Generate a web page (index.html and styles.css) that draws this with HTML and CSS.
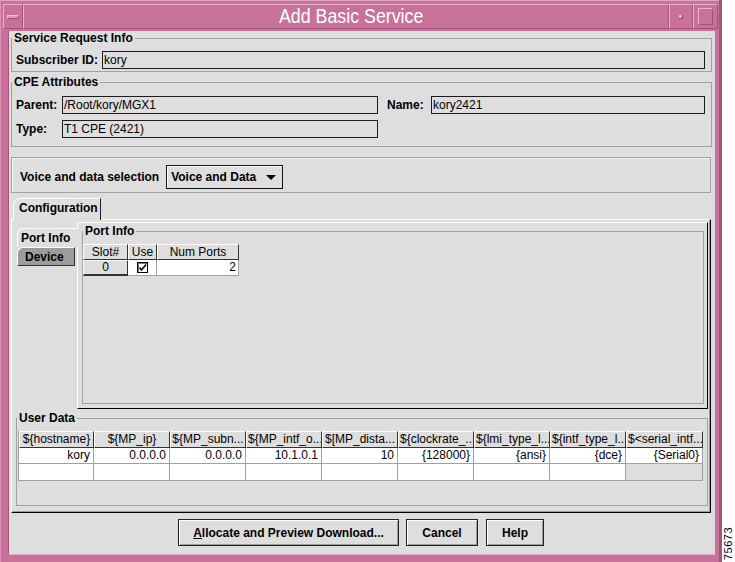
FILE: index.html
```html
<!DOCTYPE html>
<html>
<head>
<meta charset="utf-8">
<title>Add Basic Service</title>
<link rel="stylesheet" href="styles.css">
</head>
<body>
<div class="screen">
  <div class="window">
    <div class="titlebar">
      <div class="tb-btn tb-menu"><span class="tb-dash"></span></div>
      <div class="tb-title"><span class="tb-text">Add Basic Service</span></div>
      <div class="tb-btn tb-min"><span class="tb-dot"></span></div>
      <div class="tb-btn tb-max"><span class="tb-square"></span></div>
    </div>
    <div class="frame">
      <div class="content">
        <fieldset class="group g1">
          <legend>Service Request Info</legend>
          <div class="g1-body">
            <span class="lbl lbl-sub">Subscriber ID:</span>
            <div class="field f-sub">kory</div>
          </div>
        </fieldset>

        <fieldset class="group g2">
          <legend>CPE Attributes</legend>
          <div class="cpe-grid">
            <span class="lbl">Parent:</span>
            <div class="field">/Root/kory/MGX1</div>
            <span class="lbl lbl-name">Name:</span>
            <div class="field">kory2421</div>
            <span class="lbl">Type:</span>
            <div class="field">T1 CPE (2421)</div>
          </div>
        </fieldset>

        <div class="voice">
          <span class="lbl lbl-voice">Voice and data selection</span>
          <div class="combo"><span class="combo-text">Voice and Data</span><span class="combo-arrow"></span></div>
        </div>

        <div class="tabrow"><div class="tab">Configuration</div></div>

        <div class="tabpanel">
          <div class="toprow">
            <div class="vtabs">
              <div class="vtab vtab-on">Port Info</div>
              <div class="vtab vtab-off">Device</div>
            </div>
            <div class="portpanel">
              <fieldset class="group g-port">
                <legend>Port Info</legend>
                <div class="port-body">
                  <div class="ptable">
                    <div class="th">Slot#</div>
                    <div class="th">Use</div>
                    <div class="th">Num Ports</div>
                    <div class="rowhead">0</div>
                    <div class="td td-check"><span class="check"><svg width="9" height="9" viewBox="0 0 9 9"><path d="M1.5 4.5 L3.5 7 L8 1.5" fill="none" stroke="#000" stroke-width="1.6"/></svg></span></div>
                    <div class="td td-num">2</div>
                  </div>
                </div>
              </fieldset>
            </div>
          </div>

          <fieldset class="group g-user">
            <legend>User Data</legend>
            <div class="user-body">
              <div class="utable">
                <div class="uh">${hostname}</div>
                <div class="uh">${MP_ip}</div>
                <div class="uh">${MP_subn...</div>
                <div class="uh">${MP_intf_o...</div>
                <div class="uh">$[MP_dista...</div>
                <div class="uh">${clockrate_...</div>
                <div class="uh">${lmi_type_l...</div>
                <div class="uh">${intf_type_l...</div>
                <div class="uh">$&lt;serial_intf...</div>

                <div class="ud">kory</div>
                <div class="ud">0.0.0.0</div>
                <div class="ud">0.0.0.0</div>
                <div class="ud">10.1.0.1</div>
                <div class="ud">10</div>
                <div class="ud">{128000}</div>
                <div class="ud">{ansi}</div>
                <div class="ud">{dce}</div>
                <div class="ud">{Serial0}</div>

                <div class="ud"></div>
                <div class="ud"></div>
                <div class="ud"></div>
                <div class="ud"></div>
                <div class="ud"></div>
                <div class="ud"></div>
                <div class="ud"></div>
                <div class="ud"></div>
                <div class="ud ud-gray"></div>
              </div>
            </div>
          </fieldset>
        </div>

        <div class="buttons">
          <button class="btn btn-alloc"><span class="mn">A</span>llocate and Preview Download...</button>
          <button class="btn btn-cancel">Cancel</button>
          <button class="btn btn-help">Help</button>
        </div>
      </div>
    </div>
  </div>
  <div class="side"><span class="fignum">75673</span></div>
</div>
</body>
</html>
```

FILE: styles.css
```css
* { box-sizing: border-box; }
html, body { margin: 0; padding: 0; }
body {
  width: 735px;
  height: 562px;
  overflow: hidden;
  background: #ffffff;
  font-family: "Liberation Sans", Arial, sans-serif;
  font-size: 12px;
  color: #000;
}

.screen { display: flex; width: 735px; height: 562px; }

/* ---------- window frame ---------- */
.window {
  width: 722px;
  height: 562px;
  display: flex;
  flex-direction: column;
  background: #c8719a;
  border-left: 1px solid #dc93b5;
  border-right: 3px solid #a5557b;
}

.titlebar {
  height: 31px;
  display: flex;
  padding: 3px 1px 2px 2px;
  border-top: 1px solid #e2a2c0;
}
.tb-btn, .tb-title {
  border: 1px solid;
  border-color: #e9b2cb #a3517a #a3517a #e9b2cb;
}
.tb-menu {
  width: 20px;
  display: flex;
  align-items: center;
  justify-content: center;
}
.tb-dash {
  width: 12px;
  height: 4px;
  background: #dc98b8;
  border: 1px solid;
  border-color: #f0c6d8 #a3517a #a3517a #f0c6d8;
}
.tb-title {
  flex: 1;
  display: flex;
  align-items: center;
  justify-content: center;
  padding-left: 10px;
}
.tb-text {
  display: inline-block;
  color: #ffffff;
  font-family: "Liberation Sans", Arial, sans-serif;
  font-size: 20px;
  line-height: 23px;
  transform: scaleX(0.89);
}
.tb-min {
  width: 24px;
  display: flex;
  align-items: center;
  justify-content: center;
}
.tb-dot {
  width: 4px;
  height: 4px;
  background: #e5b5ca;
  border-right: 1px solid #8f4566;
  border-bottom: 1px solid #8f4566;
}
.tb-max {
  width: 25px;
  display: flex;
  align-items: center;
  justify-content: center;
}
.tb-square {
  width: 15px;
  height: 17px;
  border: 1px solid;
  border-color: #eab4cc #a3517a #a3517a #eab4cc;
}

.frame {
  flex: 1;
  display: flex;
  padding: 0 4px 8px 8px;
}

.content {
  flex: 1;
  background: #dedede;
  display: flex;
  flex-direction: column;
  padding: 1px 3px 0 2px;
  box-shadow: -1px 0 0 #a5557b, 0 1px 0 #e6a9c5;
}

/* ---------- group boxes ---------- */
fieldset.group {
  margin: 0;
  padding: 0;
  min-width: 0;
  border: 1px solid #a2a2a2;
}
fieldset.group > legend {
  padding: 0 2px;
  margin: 0;
  font-weight: bold;
  font-size: 12px;
  line-height: 13px;
}

.lbl { font-weight: bold; white-space: nowrap; }

.field {
  height: 18px;
  border: 1px solid #1c1c1c;
  background: #dedede;
  padding: 0 1px;
  line-height: 16px;
  white-space: nowrap;
  overflow: hidden;
}

.g1-body {
  display: flex;
  align-items: center;
  padding: 6px 6px 2px 4px;
}
.lbl-sub { width: 86px; }
.f-sub { flex: 1; }

fieldset.g2 { margin-top: 4px; }
.cpe-grid {
  display: grid;
  grid-template-columns: 46px 316px 53px 274px;
  grid-auto-rows: 18px;
  row-gap: 6px;
  align-items: center;
  padding: 7px 0 8px 4px;
}
.lbl-name { padding-left: 9px; }

/* ---------- voice panel ---------- */
.voice {
  margin-top: 10px;
  margin-right: 1px;
  border: 1px solid #a2a2a2;
  box-shadow: inset 1px 1px 0 #f4f4f4;
  display: flex;
  align-items: center;
  gap: 7px;
  padding: 7px 8px 3px 8px;
}
.combo {
  width: 117px;
  height: 24px;
  border: 1px solid #111;
  box-shadow: inset 1px 1px 0 #ffffff;
  display: flex;
  align-items: center;
  justify-content: space-between;
  padding: 0 6px 0 4px;
  font-weight: bold;
}
.combo-arrow {
  width: 0;
  height: 0;
  border-left: 5px solid transparent;
  border-right: 5px solid transparent;
  border-top: 5px solid #000;
  margin-top: 1px;
}

/* ---------- tabs ---------- */
.tabrow {
  margin-top: 5px;
  display: flex;
  position: relative;
  z-index: 1;
}
.tab {
  margin-left: 2px;
  width: 88px;
  height: 22px;
  margin-bottom: -1px;
  border-top: 1px solid #ffffff;
  border-left: 1px solid #ffffff;
  border-right: 1px solid #222;
  border-top-left-radius: 7px;
  background: #dedede;
  font-weight: bold;
  line-height: 19px;
  padding-left: 5px;
}

.tabpanel {
  height: 294px;
  margin-right: 1px;
  border-top: 1px solid #ffffff;
  border-left: 1px solid #ffffff;
  border-right: 1px solid #000;
  border-bottom: 1px solid #000;
  box-shadow: inset -1px -1px 0 #9a9a9a;
  padding: 2px 2px 6px 5px;
  display: flex;
  flex-direction: column;
}

.toprow {
  height: 187px;
  display: flex;
}
.vtabs {
  width: 60px;
  padding-top: 6px;
  display: flex;
  flex-direction: column;
}
.vtab {
  height: 19px;
  font-weight: bold;
  line-height: 18px;
  border-top-left-radius: 6px;
}
.vtab-on {
  border-top: 1px solid #fff;
  border-left: 1px solid #fff;
  padding-left: 3px;
  background: #dedede;
  position: relative;
  z-index: 1;
  margin-right: -1px;
}
.vtab-off {
  width: 58px;
  background: #9c9c9c;
  border-top: 1px solid #fff;
  border-left: 1px solid #fff;
  border-right: 1px solid #333;
  border-bottom: 1px solid #333;
  padding-left: 7px;
}

.portpanel {
  flex: 1;
  display: flex;
  border-top: 1px solid #fff;
  border-left: 1px solid #fff;
  border-right: 1px solid #000;
  border-bottom: 1px solid #000;
}
fieldset.g-port {
  flex: 1;
  margin: 2px 3px 4px 4px;
}
.port-body { padding: 6px 0 0 0; }
.ptable {
  display: grid;
  grid-template-columns: 45px 29px 82px;
  grid-template-rows: 16px 16px;
  width: 156px;
}
.th, .uh {
  background: #dedede;
  border-top: 1px solid #ffffff;
  border-left: 1px solid #ffffff;
  border-right: 1px solid #333;
  border-bottom: 1px solid #333;
  text-align: center;
  line-height: 14px;
  white-space: nowrap;
  overflow: hidden;
}
.rowhead {
  background: #dedede;
  border-top: 1px solid #ffffff;
  border-left: 1px solid #ffffff;
  border-right: 1px solid #333;
  border-bottom: 2px solid #333;
  text-align: center;
  line-height: 13px;
}
.td {
  background: #ffffff;
  border-right: 1px solid #a0a0a0;
  border-bottom: 1px solid #a0a0a0;
  line-height: 15px;
}
.td-check {
  display: flex;
  align-items: center;
  justify-content: center;
}
.check {
  width: 11px;
  height: 11px;
  border: 1px solid #000;
  box-shadow: inset 1px 1px 0 #777;
  background: #fff;
  display: flex;
  align-items: center;
  justify-content: center;
}
.check svg { display: block; }
.td-num { text-align: right; padding-right: 2px; }

/* ---------- user data ---------- */
fieldset.g-user {
  margin: 3px 0 0 -1px;
}
.user-body { padding: 6px 0 24px 1px; }
.utable {
  display: grid;
  grid-template-columns: 75px repeat(7, 76px) 77px;
  grid-template-rows: 17px 16px 17px;
  width: 684px;
  border-left: 1px solid #a0a0a0;
}
.uh {
  text-align: center;
  padding: 0 1px;
}
.ud {
  background: #ffffff;
  border-right: 1px solid #a0a0a0;
  border-bottom: 1px solid #a0a0a0;
  text-align: right;
  padding-right: 3px;
  line-height: 15px;
  white-space: nowrap;
}
.ud-gray { background: #dedede; }

/* ---------- buttons ---------- */
.buttons {
  margin-top: 6px;
  display: flex;
  justify-content: center;
  gap: 7px;
  padding-right: 1px;
}
.btn {
  height: 27px;
  margin: 0;
  padding: 0;
  background: #dedede;
  border: 1px solid #222;
  box-shadow: inset 1px 1px 0 #ffffff, inset -1px -1px 0 #9c9c9c;
  font-family: "Liberation Sans", Arial, sans-serif;
  font-size: 12px;
  font-weight: bold;
  color: #000;
}
.btn-alloc { width: 221px; }
.btn-cancel { width: 72px; }
.btn-help { width: 58px; margin-left: 1px; }
.mn { text-decoration: underline; }

/* ---------- figure number ---------- */
.side {
  flex: 1;
  display: flex;
  flex-direction: column;
  justify-content: flex-end;
  align-items: center;
  padding-bottom: 2px;
}
.fignum {
  writing-mode: vertical-rl;
  transform: rotate(180deg);
  font-size: 11px;
  line-height: 11px;
  letter-spacing: 0.5px;
}
```
